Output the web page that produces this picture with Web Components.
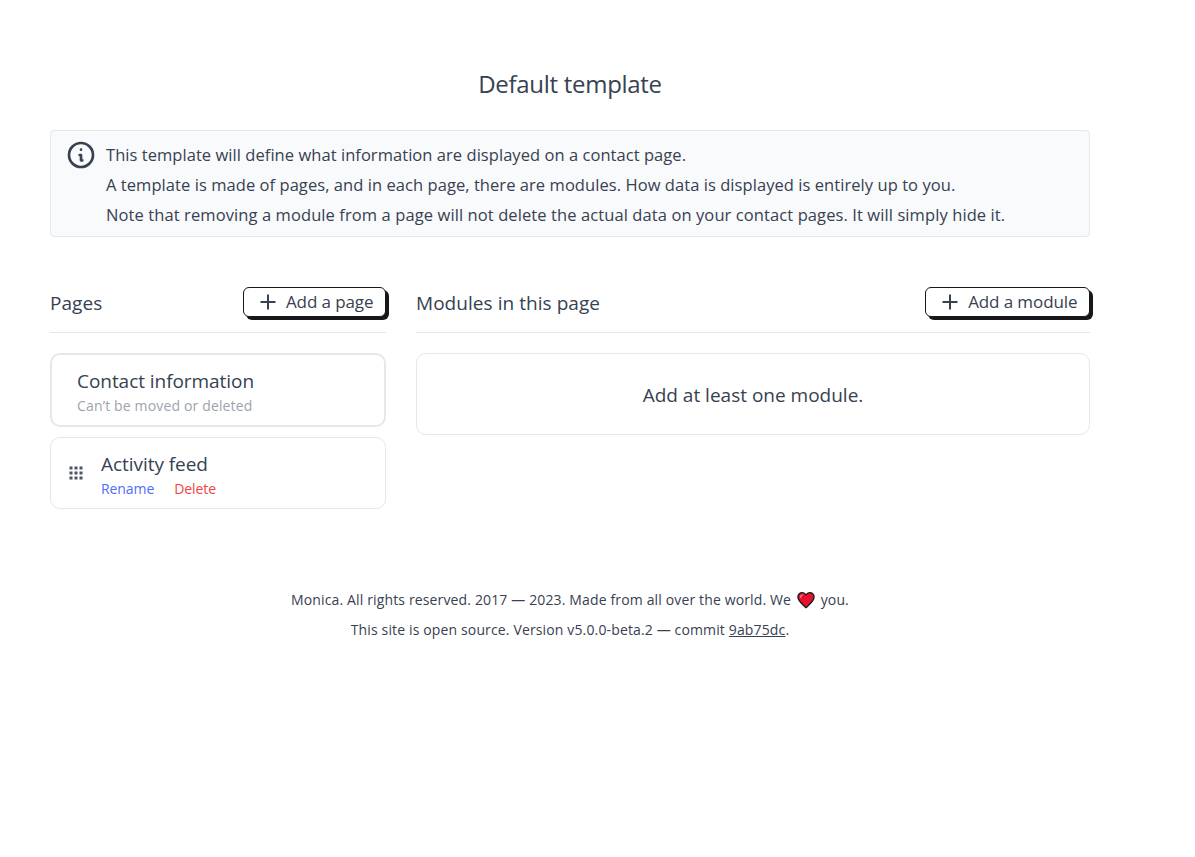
<!DOCTYPE html>
<html>
<head>
<meta charset="utf-8">
<title>Default template</title>
<style>
	html, body { margin: 0; background: #fff; }
	body {
		font-family: "Open Sans", "Noto Sans", sans-serif;
		color: #374151;
		font-size: 16px;
	}
</style>
</head>
<body>
<template id="tpl-page">
	<style>
		:host { display: block; width: 1040px; padding: 69px 0 0 50px; }
		h1 { margin: 0 0 32px; height: 29px; font-size: 24px; line-height: 29px; font-weight: 400; text-align: center; color: #374151; letter-spacing: -0.29px; }
		.cols { display: grid; grid-template-columns: 336px 674px; gap: 30px; margin-top: 50px; align-items: start; }
	</style>
	<h1><slot name="title"></slot></h1>
	<slot name="notice"></slot>
	<div class="cols"><slot></slot></div>
</template>

<template id="tpl-notice">
	<style>
		:host { display: flex; box-sizing: border-box; height: 107px; padding: 8px 14px; gap: 9px; background: #f9fafb; border: 1px solid #e5e7eb; border-radius: 4px; font-size: 16.5px; letter-spacing: 0.06px; }
		svg { width: 32px; height: 32px; flex: none; color: #374151; }
		div { line-height: 30px; white-space: nowrap; margin-top: 1px; }
	</style>
	<svg viewBox="0 0 24 24" fill="none" stroke="currentColor" stroke-width="2" stroke-linecap="round" stroke-linejoin="round">
		<path d="M13 16h-1v-4h-1m1-4h.01M21 12a9 9 0 11-18 0 9 9 0 0118 0z"/>
	</svg>
	<div><slot></slot></div>
</template>

<template id="tpl-section">
	<style>
		:host { display: block; }
		.head { display: flex; justify-content: space-between; align-items: flex-start; height: 45px; border-bottom: 1px solid #e5e7eb; margin-bottom: 20px; }
		.label { font-size: 19px; line-height: 28px; margin-top: 2px; letter-spacing: 0.05px; }
	</style>
	<div class="head">
		<span class="label"><slot name="label"></slot></span>
		<slot name="action"></slot>
	</div>
	<slot></slot>
</template>

<template id="tpl-button">
	<style>
		:host { display: inline-flex; align-items: center; box-sizing: border-box; height: 30px; padding: 0 11.6px 2px 16px; gap: 10px; background: #fff; border: 1px solid #18181b; border-radius: 6px; box-shadow: 3px 3px 0 0 #18181b; font-size: 17px; letter-spacing: -0.1px; white-space: nowrap; }
		svg { width: 16px; height: 16px; flex: none; margin-top: 2px; }
	</style>
	<svg viewBox="0 0 16 16" fill="none" stroke="#374151" stroke-width="2" stroke-linecap="butt"><path d="M8 .5v15M.5 8h15"/></svg>
	<slot></slot>
</template>

<template id="tpl-page-item">
	<style>
		:host { display: block; box-sizing: border-box; background: #fff; border: 1px solid #e5e7eb; border-radius: 10px; margin-bottom: 10px; }
		:host([locked]) { border-width: 2px; height: 74px; padding: 14px 25px 0; }
		:host(:not([locked])) { height: 72px; display: flex; padding: 14px 0 0 18px; gap: 18px; }
		.grip { width: 14px; height: 14px; margin-top: 14px; flex: none; color: #4b5563; }
		.name { font-size: 19px; line-height: 24px; letter-spacing: -0.05px; }
		.sub { font-size: 14px; line-height: 24px; margin-top: 1px; display: flex; gap: 20px; letter-spacing: -0.08px; }
		:host([locked]) .sub { color: #9ca3af; letter-spacing: 0.15px; }
	</style>
	<svg class="grip" viewBox="0 0 14 14" fill="currentColor">
		<rect x=".5" y=".5" width="3" height="3"/><rect x="5.5" y=".5" width="3" height="3"/><rect x="10.5" y=".5" width="3" height="3"/>
		<rect x=".5" y="5.5" width="3" height="3"/><rect x="5.5" y="5.5" width="3" height="3"/><rect x="10.5" y="5.5" width="3" height="3"/>
		<rect x=".5" y="10.5" width="3" height="3"/><rect x="5.5" y="10.5" width="3" height="3"/><rect x="10.5" y="10.5" width="3" height="3"/>
	</svg>
	<div>
		<div class="name"><slot name="name"></slot></div>
		<div class="sub"><slot></slot></div>
	</div>
</template>

<template id="tpl-empty">
	<style>
		:host { display: flex; align-items: center; justify-content: center; box-sizing: border-box; height: 82px; padding-top: 2px; border: 1px solid #e5e7eb; border-radius: 10px; font-size: 19px; }
	</style>
	<slot></slot>
</template>

<template id="tpl-footer">
	<style>
		:host { display: block; width: 1040px; padding: 66px 0 0 50px; text-align: center; font-size: 14px; line-height: 30px; letter-spacing: 0.14px; }
		svg { width: 18px; height: 18px; vertical-align: -4px; margin: 0 2px; }
	</style>
	<div>Monica. All rights reserved. 2017 — 2023. Made from all over the world. We
		<svg viewBox="0 0 20 20">
			<path d="M10 18.5 C6 14.5 1 11.5 1 6.8 C1 3.6 3.4 1.8 5.8 1.8 C7.7 1.8 9.2 2.9 10 4.4 C10.8 2.9 12.3 1.8 14.2 1.8 C16.6 1.8 19 3.6 19 6.8 C19 11.5 14 14.5 10 18.5 Z" fill="#e8112d" stroke="#1a1a1a" stroke-width="1.5" stroke-linejoin="round"/>
			<path d="M3.4 6.6 C3.4 5 4.6 4 5.8 4 C6.4 4 6.9 4.2 7.3 4.5 C5.6 4.6 4.6 5.6 4.6 8 C4 7.8 3.4 7.4 3.4 6.6 Z" fill="#ff8a96"/>
		</svg>
		you.</div>
	<div><slot></slot></div>
</template>

<script>
	function define(tag, tplId) {
		customElements.define(tag, class extends HTMLElement {
			constructor() {
				super();
				this.attachShadow({ mode: "open" });
				this.shadowRoot.appendChild(document.getElementById(tplId).content.cloneNode(true));
			}
			connectedCallback() {
				// the locked page has no drag handle
				if (tag == "page-item" && this.hasAttribute("locked")) {
					this.shadowRoot.querySelector(".grip").remove();
				}
			}
		});
	}
	define("template-page", "tpl-page");
	define("info-notice", "tpl-notice");
	define("list-section", "tpl-section");
	define("add-button", "tpl-button");
	define("page-item", "tpl-page-item");
	define("empty-state", "tpl-empty");
	define("site-footer", "tpl-footer");
</script>

<template-page>
	<span slot="title">Default template</span>
	<info-notice slot="notice">
		<span style="letter-spacing:0.05px">This template will define what information are displayed on a contact page.</span><br>
		A template is made of pages, and in each page, there are modules. How data is displayed is entirely up to you.<br>
		<span style="letter-spacing:0.095px">Note that removing a module from a page will not delete the actual data on your contact pages. It will simply hide it.</span>
	</info-notice>
	<list-section>
		<span slot="label">Pages</span>
		<add-button slot="action">Add a page</add-button>
		<page-item locked>
			<span slot="name">Contact information</span>
			Can’t be moved or deleted
		</page-item>
		<page-item>
			<span slot="name">Activity feed</span>
			<a style="color:#4f6ef7">Rename</a>
			<a style="color:#ef4444">Delete</a>
		</page-item>
	</list-section>
	<list-section>
		<span slot="label">Modules in this page</span>
		<add-button slot="action">Add a module</add-button>
		<empty-state>Add at least one module.</empty-state>
	</list-section>
</template-page>
<site-footer>This site is open source. Version v5.0.0-beta.2 — commit <a style="color:inherit;text-decoration:underline">9ab75dc</a>.</site-footer>
</body>
</html>
